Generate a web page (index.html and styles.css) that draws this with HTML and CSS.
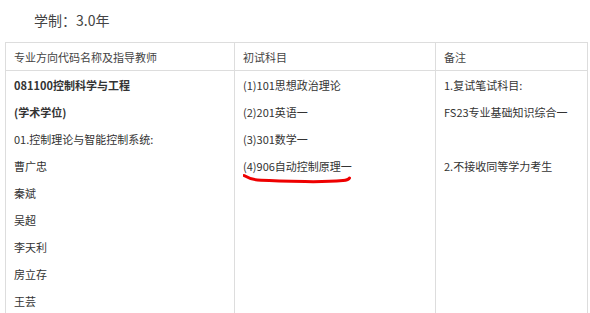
FILE: index.html
```html
<!DOCTYPE html>
<html lang="zh-CN">
<head>
    <meta charset="UTF-8">
    <meta name="viewport" content="width=device-width, initial-scale=1.0">
    <title>学制与考试科目</title>
    <link rel="stylesheet" href="styles.css">
</head>
<body>
    <div class="page">
        <p class="duration">学制：3.0年</p>
        <table class="plan">
            <colgroup>
                <col class="col-major">
                <col class="col-exam">
                <col class="col-note">
            </colgroup>
            <thead>
                <tr>
                    <th>专业方向代码名称及指导教师</th>
                    <th>初试科目</th>
                    <th>备注</th>
                </tr>
            </thead>
            <tbody>
                <tr>
                    <td>
                        <p class="strong">081100控制科学与工程</p>
                        <p class="strong">(学术学位)</p>
                        <p>01.控制理论与智能控制系统:</p>
                        <p>曹广忠</p>
                        <p>秦斌</p>
                        <p>吴超</p>
                        <p>李天利</p>
                        <p>房立存</p>
                        <p>王芸</p>
                    </td>
                    <td>
                        <p>(1)101思想政治理论</p>
                        <p>(2)201英语一</p>
                        <p>(3)301数学一</p>
                        <p class="marked">(4)906自动控制原理一
                            <!-- hand-drawn pen stroke under the subject -->
                            <svg class="pen" width="112" height="28" viewBox="0 0 112 28">
                                <path d="M1 17.5 C6 20.5 11 22 18 22.3 C30 22.8 45 23.2 62 23.6 C78 23.8 92 23.3 100 22.6 C104 22.2 106 21 106.5 20" />
                            </svg>
                        </p>
                    </td>
                    <td>
                        <p>1.复试笔试科目:</p>
                        <p>FS23专业基础知识综合一</p>
                        <p>&nbsp;</p>
                        <p>2.不接收同等学力考生</p>
                    </td>
                </tr>
            </tbody>
        </table>
    </div>
</body>
</html>
```

FILE: styles.css
```css
body {
    margin: 0;
    font-family: "Noto Sans CJK SC", "Liberation Sans", sans-serif;
    color: #333;
    background: #fff;
}
.page {
    padding: 0 4px 0 5px;
}
.duration {
    margin: 0;
    padding: 11px 0 0 29px;
    height: 31px;
    line-height: 19px;
    font-size: 14px;
    color: #444;
}
.plan {
    width: 582px;
    border-collapse: collapse;
    table-layout: fixed;
    font-size: 11px;
}
.col-major { width: 229px; }
.col-exam { width: 201px; }
.col-note { width: 152px; }
.plan th,
.plan td {
    border: 1px solid #ddd;
    text-align: left;
    vertical-align: top;
}
.plan th {
    font-weight: normal;
    padding: 6px 8px 4px;
    line-height: 17px;
    color: #444;
}
.plan td {
    padding: 6px 8px 0;
}
.plan p {
    margin: 0 0 10px;
    line-height: 17px;
}
.plan .strong {
    font-weight: bold;
}
.marked {
    position: relative;
}
.pen {
    position: absolute;
    left: 0;
    top: 0;
}
.pen path {
    fill: none;
    stroke: #e00;
    stroke-width: 3;
    stroke-linecap: round;
}
```
